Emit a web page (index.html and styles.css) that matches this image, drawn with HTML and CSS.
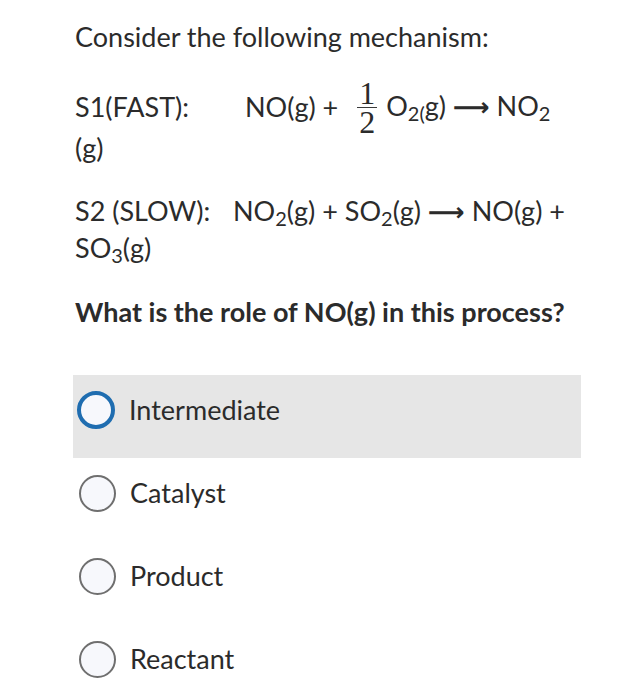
FILE: index.html
```html
<!DOCTYPE html>
<html>
<head>
<meta charset="utf-8">
<link rel="stylesheet" href="styles.css">
</head>
<body>
<div class="page">
  <p class="intro">Consider the following mechanism:</p>
  <div class="s1row"><span class="label1">S1(FAST):</span><span class="eq">NO(g) +&nbsp;</span><span class="frac"><span class="num">1</span><span class="den">2</span></span><span class="eq">O<sub>2(</sub>g) <span class="arrow">⟶</span> NO<sub>2</sub></span></div>
  <p class="line gline">(g)</p>
  <p class="line s2"><span class="label2">S2 (SLOW):</span>NO<sub>2</sub>(g) + SO<sub>2</sub>(g) <span class="arrow">⟶</span> NO(g) +</p>
  <p class="line">SO<sub>3</sub>(g)</p>
  <p class="question">What is the role of NO(g) in this process?</p>
  <div class="options">
    <label class="option selected"><span class="inner"><span class="radio"></span><span class="text">Intermediate</span></span></label>
    <label class="option"><span class="inner"><span class="radio"></span><span class="text">Catalyst</span></span></label>
    <label class="option"><span class="inner"><span class="radio"></span><span class="text">Product</span></span></label>
    <label class="option"><span class="inner"><span class="radio"></span><span class="text">Reactant</span></span></label>
  </div>
</div>
</body>
</html>
```
FILE: styles.css
```css
html, body {
  margin: 0;
  padding: 0;
  background: #ffffff;
}
.page {
  font-family: Lato, "Noto Sans", sans-serif;
  color: #2b2b2b;
  font-size: 27px;
  padding: 19px 0 0 75px;
  width: 530px;
}
p {
  margin: 0;
}
.intro {
  line-height: 36px;
  margin-bottom: 28px;
}
.s1row {
  display: flex;
  align-items: center;
  height: 47px;
  white-space: nowrap;
}
.eq {
  line-height: 36px;
}
.line {
  line-height: 35px;
}
.gline {
  line-height: 36px;
  margin-bottom: 27px;
}
.label1 {
  display: inline-block;
  width: 170px;
}
.label2 {
  display: inline-block;
  width: 158px;
}
sub {
  font-size: 0.74em;
  vertical-align: -0.24em;
  line-height: 0;
}
.arrow {
  font-family: "DejaVu Sans", sans-serif;
  font-weight: bold;
  font-size: 0.95em;
}
.frac {
  display: inline-flex;
  flex-direction: column;
  align-items: center;
  font-family: "Liberation Serif", serif;
  font-size: 32px;
  line-height: 25px;
  margin: 2px 9px 0 12px;
}
.frac .num {
  border-bottom: 1px solid #3a3a3a;
  padding: 0 2px 1px;
}
.frac .den {
  padding-top: 2px;
}
.question {
  font-weight: bold;
  line-height: 35px;
  margin-top: 29px;
  margin-bottom: 46px;
}
.options {
  margin-left: -2px;
  width: 508px;
}
.option {
  display: block;
  height: 83px;
  padding: 16px 0 0 4px;
  box-sizing: border-box;
}
.inner {
  display: flex;
  align-items: center;
  gap: 14px;
  height: 38px;
}
.option .text {
  padding-bottom: 2px;
}
.option.selected {
  background: #e6e6e6;
  padding-left: 4px;
}
.radio {
  width: 33px;
  height: 33px;
  border: 2px solid #6f6f6f;
  border-radius: 50%;
  background: #f7f8fc;
  flex: none;
  margin-left: 2px;
}
.selected .radio {
  width: 30px;
  height: 30px;
  border: 4px solid #1f6db0;
  margin-left: 0;
}
```
